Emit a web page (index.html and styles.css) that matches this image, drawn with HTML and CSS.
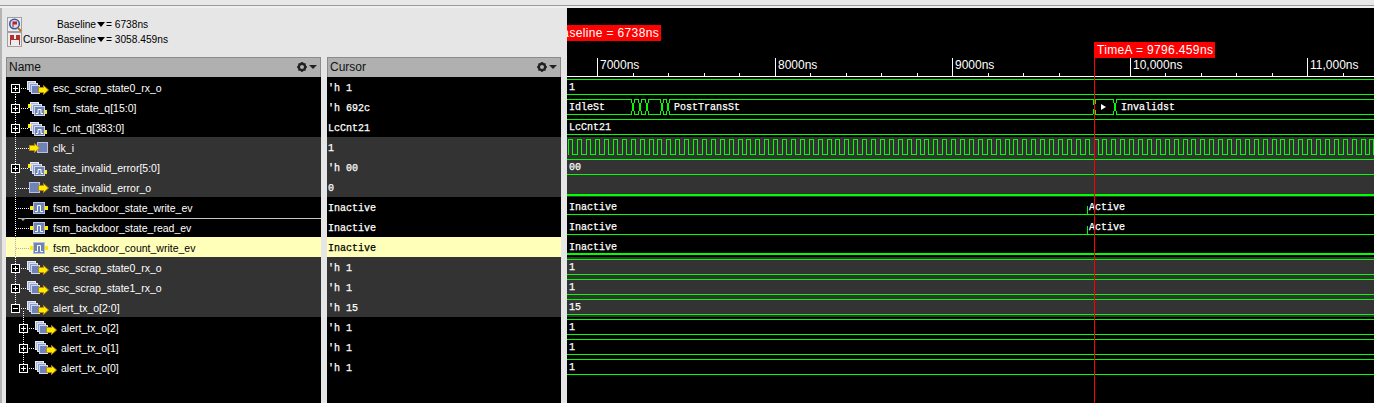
FILE: index.html
```html
<!DOCTYPE html>
<html lang="en">
<head>
<meta charset="utf-8">
<title>Waveform viewer</title>
<link rel="stylesheet" href="styles.css">
</head>
<body>
<svg class="defs" width="0" height="0" aria-hidden="true">
  <defs>
    <g id="plus"><rect x="5.5" y="7.5" width="8" height="8" fill="#000" stroke="#fff"/><path d="M7 11.5h5M9.5 9v5" stroke="#fff"/></g>
    <g id="minus"><rect x="5.5" y="7.5" width="8" height="8" fill="#000" stroke="#fff"/><path d="M7 11.5h5" stroke="#fff"/></g>
    <g id="arrow"><path d="M0.5 2.5h5v-2l5 4.500-5 4.500v-2h-5z" fill="#ffea00" stroke="#b98a10"/></g>
    <g id="stack">
      <rect x="1.5" y="2.5" width="8" height="8" fill="#a9b7db" stroke="#e6eaf5"/>
      <rect x="3.5" y="4.5" width="8" height="8" fill="#8b9dcb" stroke="#dbe1f1"/>
      <rect x="5.5" y="6.5" width="8" height="8" fill="#6f83b8" stroke="#cfd7ea"/>
    </g>
    <g id="i-group-out"><use href="#stack"/><use href="#arrow" x="12" y="6"/></g>
    <g id="i-group-bus">
      <rect x="4.5" y="3.5" width="8" height="8" fill="#a9b7db" stroke="#e6eaf5"/>
      <rect x="6.5" y="5.5" width="9" height="9" fill="#8b9dcb" stroke="#dbe1f1"/>
      <rect x="8.5" y="7.5" width="10" height="9" fill="#6f83b8" stroke="#cfd7ea"/>
      <path d="M10 14.500h2v-4h3v4h2" fill="none" stroke="#fff"/>
      <rect x="2" y="5" width="2" height="4" fill="#ffea00"/><rect x="5" y="5" width="1" height="2" fill="#ffea00"/><rect x="19" y="11" width="2" height="4" fill="#ffea00"/>
    </g>
    <g id="i-clk"><rect x="11.500" y="3.500" width="10" height="10" fill="#6f83b8" stroke="#b5c1de"/><use href="#arrow" x="3" y="4"/></g>
    <g id="i-out"><rect x="3.500" y="3.500" width="10" height="10" fill="#6f83b8" stroke="#b5c1de"/><use href="#arrow" x="12" y="4"/></g>
    <g id="i-ev">
      <rect x="4" y="7" width="3" height="4" fill="#ffea00"/><rect x="19" y="7" width="3" height="4" fill="#ffea00"/>
      <rect x="7.500" y="3.500" width="11" height="11" fill="#6f83b8" stroke="#b5c1de"/>
      <path d="M9 12.500h2.500v-6h3v6h2.500" fill="none" stroke="#fff"/>
    </g>
    <g id="gear">
      <circle cx="5" cy="5" r="3.200" fill="none" stroke="#222" stroke-width="2.400"/>
      <path d="M5 0v10M0 5h10M1.500 1.500l7 7M8.500 1.500l-7 7" stroke="#222" stroke-width="1.500" stroke-dasharray="2 6"/>
      <path d="M12 3h8l-4 4z" fill="#222"/>
    </g>
    <path id="clk10" d="M0.500 17.500V2.500H4.500V17.500H9.500V2.500H13.500V17.500H18.500V2.500H22.500V17.500H27.500V2.500H31.500V17.500H36.500V2.500H40.500V17.500H45.500V2.500H49.500V17.500H54.500V2.500H58.500V17.500H63.500V2.500H67.500V17.500H72.500V2.500H76.500V17.500H81.500V2.500H85.500V17.500H89.500" fill="none" stroke="#0f0" shape-rendering="crispEdges"/>
  </defs>
</svg>

<div class="topbar"></div>
<div class="main">
  <div class="left">
    <div class="toolbar">
      <div class="tool-btn">
        <svg width="14" height="14" viewBox="0 0 14 14"><circle cx="6.500" cy="6" r="4.800" fill="#d8deef" stroke="#3d5a9c" stroke-width="1.600"/><path d="M5 3.500v6" stroke="#a02020"/><path d="M5 3.500h4v3h-4z" fill="#c02020"/><path d="M10 10l3 3" stroke="#c07010" stroke-width="2"/></svg>
      </div>
      <div class="tool-label">Baseline</div>
      <div class="tool-drop"></div>
      <div class="tool-val">= 6738ns</div>
      <div class="tool-btn">
        <svg width="14" height="14" viewBox="0 0 14 14"><path d="M2.500 3v9M11.500 3v9M2.500 6.500h9" stroke="#a83232" fill="none"/><path d="M2 2h4v4h-4zM8 2h4v4h-4z" fill="#b03030"/></svg>
      </div>
      <div class="tool-label">Cursor-Baseline</div>
      <div class="tool-drop"></div>
      <div class="tool-val">= 3058.459ns</div>
    </div>
    <div class="panels">
      <section class="panel names">
        <header class="phead"><span>Name</span><svg width="20" height="10"><use href="#gear"/></svg></header>
        <div class="prows">
          <div class="row"><svg class="tree" width="46" height="20"><path class="dot" d="M9.500 11V20M13 11.500H21"/><use href="#plus"/><g transform="translate(20 2)"><use href="#i-group-out"/></g></svg><span>esc_scrap_state0_rx_o</span></div>
          <div class="row"><svg class="tree" width="46" height="20"><path class="dot" d="M9.500 0V20M13 11.500H22"/><use href="#plus"/><g transform="translate(20 2)"><use href="#i-group-bus"/></g></svg><span>fsm_state_q[15:0]</span></div>
          <div class="row"><svg class="tree" width="46" height="20"><path class="dot" d="M9.500 0V20M13 11.500H22"/><use href="#plus"/><g transform="translate(20 2)"><use href="#i-group-bus"/></g></svg><span>lc_cnt_q[383:0]</span></div>
          <div class="row grey"><svg class="tree" width="46" height="20"><path class="dot" d="M9.500 0V20M10 11.500H23"/><g transform="translate(20 2)"><use href="#i-clk"/></g></svg><span>clk_i</span></div>
          <div class="row grey"><svg class="tree" width="46" height="20"><path class="dot" d="M9.500 0V20M13 11.500H22"/><use href="#plus"/><g transform="translate(20 2)"><use href="#i-group-bus"/></g></svg><span>state_invalid_error[5:0]</span></div>
          <div class="row grey"><svg class="tree" width="46" height="20"><path class="dot" d="M9.500 0V20M10 11.500H23"/><g transform="translate(20 2)"><use href="#i-out"/></g></svg><span>state_invalid_error_o</span></div>
          <div class="row"><svg class="tree" width="46" height="20"><path class="dot" d="M9.500 0V20M10 11.500H24"/><g transform="translate(20 2)"><use href="#i-ev"/></g></svg><span>fsm_backdoor_state_write_ev</span></div>
          <div class="row"><svg class="tree" width="46" height="20"><path class="dot" d="M9.500 0V20M10 11.500H24"/><g transform="translate(20 2)"><use href="#i-ev"/></g></svg><span>fsm_backdoor_state_read_ev</span></div>
          <div class="row sel"><svg class="tree" width="46" height="20"><path class="dot" d="M9.500 0V20M10 11.500H24"/><g transform="translate(20 2)"><use href="#i-ev"/></g></svg><span>fsm_backdoor_count_write_ev</span></div>
          <div class="row grey"><svg class="tree" width="46" height="20"><path class="dot" d="M9.500 0V20M13 11.500H21"/><use href="#plus"/><g transform="translate(20 2)"><use href="#i-group-out"/></g></svg><span>esc_scrap_state0_rx_o</span></div>
          <div class="row grey"><svg class="tree" width="46" height="20"><path class="dot" d="M9.500 0V20M13 11.500H21"/><use href="#plus"/><g transform="translate(20 2)"><use href="#i-group-out"/></g></svg><span>esc_scrap_state1_rx_o</span></div>
          <div class="row grey"><svg class="tree" width="46" height="20"><path class="dot" d="M9.500 0V8M17.500 14V20M13 11.500H21"/><use href="#minus"/><g transform="translate(20 2)"><use href="#i-group-out"/></g></svg><span>alert_tx_o[2:0]</span></div>
          <div class="row child"><svg class="tree" width="54" height="20"><path class="dot" d="M17.500 0V20M21 11.500H29"/><use href="#plus" x="8"/><g transform="translate(28 2)"><use href="#i-group-out"/></g></svg><span>alert_tx_o[2]</span></div>
          <div class="row child"><svg class="tree" width="54" height="20"><path class="dot" d="M17.500 0V20M21 11.500H29"/><use href="#plus" x="8"/><g transform="translate(28 2)"><use href="#i-group-out"/></g></svg><span>alert_tx_o[1]</span></div>
          <div class="row child"><svg class="tree" width="54" height="20"><path class="dot" d="M17.500 0V8M21 11.500H29"/><use href="#plus" x="8"/><g transform="translate(28 2)"><use href="#i-group-out"/></g></svg><span>alert_tx_o[0]</span></div>
          <div class="drop-line"></div>
        </div>
      </section>
      <section class="panel cursors">
        <header class="phead"><span>Cursor</span><svg width="20" height="10"><use href="#gear"/></svg></header>
        <div class="prows mono">
          <div class="row">'h 1</div>
          <div class="row">'h 692c</div>
          <div class="row">LcCnt21</div>
          <div class="row grey">1</div>
          <div class="row grey">'h 00</div>
          <div class="row grey">0</div>
          <div class="row">Inactive</div>
          <div class="row">Inactive</div>
          <div class="row sel">Inactive</div>
          <div class="row grey">'h 1</div>
          <div class="row grey">'h 1</div>
          <div class="row grey">'h 15</div>
          <div class="row">'h 1</div>
          <div class="row">'h 1</div>
          <div class="row">'h 1</div>
        </div>
      </section>
    </div>
  </div>

  <div class="waves">
    <svg class="ruler" width="807" height="69">
      <path d="M0 68.500H807" stroke="#fff"/>
      <path d="M30.500 50V68M208.500 50V68M385.500 50V68M563.500 50V68M740.500 50V68" stroke="#fff"/>
      <path d="M66.500 65v3M101.500 65v3M137.500 65v3M172.500 65v3M243.500 65v3M279.500 65v3M314.500 65v3M350.500 65v3M421.500 65v3M456.500 65v3M492.500 65v3M527.500 65v3M598.500 65v3M634.500 65v3M669.500 65v3M705.500 65v3M776.500 65v3" stroke="#fff"/>
      <text class="tick" x="33" y="61">7000ns</text>
      <text class="tick" x="211" y="61">8000ns</text>
      <text class="tick" x="388" y="61">9000ns</text>
      <text class="tick" x="566" y="61">10,000ns</text>
      <text class="tick" x="743" y="61">11,000ns</text>
    </svg>
    <div class="wrow"><svg width="807" height="20"><path class="w" d="M0 2.500H807M0 17.500H807"/><text class="val" x="2" y="13">1</text></svg></div>
    <div class="wrow"><svg width="807" height="20"><path class="w" d="M0 2.500H64L68 17.500H71L75 2.500H78L82 17.500H93L97 2.500H99L103 17.500H526L529 2.500H546L550 17.500H807M0 17.500H64L68 2.500H71L75 17.500H78L82 2.500H93L97 17.500H99L103 2.500H526L529 17.500H546L550 2.500H807"/><path d="M534 7l5 3-5 3z" fill="#fff"/><text class="val" x="2" y="13">IdleSt</text><text class="val" x="107" y="13">PostTransSt</text><text class="val" x="554" y="13">Invalidst</text></svg></div>
    <div class="wrow"><svg width="807" height="20"><path class="w" d="M0 2.500H807M0 17.500H807"/><text class="val" x="2" y="13">LcCnt21</text></svg></div>
    <div class="wrow grey"><svg width="807" height="20"><use href="#clk10" x="1"/><use href="#clk10" x="90"/><use href="#clk10" x="179"/><use href="#clk10" x="268"/><use href="#clk10" x="357"/><use href="#clk10" x="446"/><use href="#clk10" x="535"/><use href="#clk10" x="624"/><use href="#clk10" x="713"/><use href="#clk10" x="802"/></svg></div>
    <div class="wrow grey"><svg width="807" height="20"><path class="w" d="M0 2.500H807M0 17.500H807"/><text class="val" x="2" y="13">00</text></svg></div>
    <div class="wrow grey"><svg width="807" height="20"><path class="w thick" d="M0 18H807"/></svg></div>
    <div class="wrow"><svg width="807" height="20"><path class="w" d="M0 17.500H520.500V9"/><path class="w" d="M520 17.500H807"/><text class="val" x="2" y="13">Inactive</text><text class="val" x="522" y="13">Active</text></svg></div>
    <div class="wrow"><svg width="807" height="20"><path class="w" d="M0 17.500H520.500V9"/><path class="w" d="M520 17.500H807"/><text class="val" x="2" y="13">Inactive</text><text class="val" x="522" y="13">Active</text></svg></div>
    <div class="wrow"><svg width="807" height="20"><path class="w thick" d="M0 17H807"/><text class="val" x="2" y="13">Inactive</text></svg></div>
    <div class="wrow grey"><svg width="807" height="20"><path class="w" d="M0 2.500H807M0 17.500H807"/><text class="val" x="2" y="13">1</text></svg></div>
    <div class="wrow grey"><svg width="807" height="20"><path class="w" d="M0 2.500H807M0 17.500H807"/><text class="val" x="2" y="13">1</text></svg></div>
    <div class="wrow grey"><svg width="807" height="20"><path class="w" d="M0 2.500H807M0 17.500H807"/><text class="val" x="2" y="13">15</text></svg></div>
    <div class="wrow"><svg width="807" height="20"><path class="w" d="M0 2.500H807M0 17.500H807"/><text class="val" x="2" y="13">1</text></svg></div>
    <div class="wrow"><svg width="807" height="20"><path class="w" d="M0 2.500H807M0 17.500H807"/><text class="val" x="2" y="13">1</text></svg></div>
    <div class="wrow"><svg width="807" height="20"><path class="w" d="M0 2.500H807M0 17.500H807"/><text class="val" x="2" y="13">1</text></svg></div>
    <div class="flag baseline">Baseline = 6738ns</div>
    <div class="flag timea">TimeA = 9796.459ns</div>
    <div class="cursor-line"></div>
  </div>
</div>
</body>
</html>
```
FILE: styles.css
```css
* { box-sizing: border-box; }
html, body { margin: 0; height: 403px; overflow: hidden; background: #e6e6e6; }
body { font-family: "Liberation Sans", Arial, sans-serif; font-size: 10.5px; color: #000; }
.defs { position: absolute; }
svg { display: block; flex: none; }

.topbar { height: 8px; background: linear-gradient(#e8e8e8 0 5px, #9a9a9a 5px 6px, #f0f0f0 6px); }
.main { display: flex; height: 395px; }

.left { width: 567px; flex: none; display: flex; flex-direction: column; border-left: 2px solid #b4b4b4; background: #e6e6e6; }
.toolbar { height: 49px; flex: none; padding: 9px 0 0 5px; display: grid; grid-template-columns: 15px 74px 9px auto; grid-auto-rows: 15px; justify-content: start; align-items: center; font-size: 10.2px; }
.tool-btn { width: 15px; height: 15px; border: 1px solid #a0a0a0; background: #ececec; display: flex; align-items: center; justify-content: center; }
.tool-label { text-align: right; white-space: nowrap; }
.tool-drop { width: 0; height: 0; justify-self: center; border: 4px solid transparent; border-top: 5px solid #000; border-bottom: 0; }
.tool-val { white-space: nowrap; padding-left: 1px; }

.panels { flex: 1; display: flex; gap: 6px; padding: 0 6px 0 4px; min-height: 0; }
.panel { display: flex; flex-direction: column; background: #000; }
.names { width: 315px; }
.cursors { width: 234px; }
.phead { height: 20px; flex: none; display: flex; align-items: center; justify-content: space-between; padding: 0 3px 1px 2px; background: #b0b0b0; border: 1px solid #8c8c8c; border-bottom: 0; font-size: 12px; color: #111; }
.prows { flex: 1; position: relative; color: #fff; }
.row { height: 20px; display: flex; align-items: center; white-space: nowrap; }
.row.grey { background: #333; }
.row.sel { background: #ffffb9; color: #000; }
.names .row span { padding-left: 1px; margin-top: 2px; font-size: 10.5px; }
.mono .row { padding: 2px 0 0 1px; font-family: "Liberation Mono", "Courier New", monospace; font-size: 10px; -webkit-text-stroke: 0.25px currentColor; }
.tree { overflow: visible; }
.dot { fill: none; stroke: #fff; stroke-dasharray: 1 1; }
.sel .dot { stroke: #b0b0a0; }
.drop-line { position: absolute; left: 12px; right: 0; top: 141px; height: 1px; background: #c8c8c8; }
.drop-line::before { content: ""; position: absolute; left: 2px; top: 0; border: 3px solid transparent; border-top: 3px solid #a8a8a8; border-bottom: 0; }

.waves { flex: 1; position: relative; overflow: hidden; background: #000; min-width: 0; }
.ruler { display: block; }
.tick { fill: #fff; font-family: "Liberation Sans", Arial, sans-serif; font-size: 12px; }
.wrow { height: 20px; }
.wrow.grey { background: #333; }
.w { fill: none; stroke: #0f0; shape-rendering: crispEdges; }
.w.thick { stroke-width: 2; }
.val { fill: #fff; stroke: #fff; stroke-width: 0.25px; font-family: "Liberation Mono", "Courier New", monospace; font-size: 10px; }

.flag { position: absolute; height: 16px; background: #f00; color: #fff; font-size: 12px; line-height: 16px; letter-spacing: 0.35px; white-space: nowrap; }
.baseline { left: -16px; top: 17px; width: 110px; padding-left: 3px; }
.timea { left: 527px; top: 34px; width: 121px; padding-left: 3px; }
.cursor-line { position: absolute; left: 527px; top: 50px; bottom: 0; width: 1px; background: #f00; }
```
